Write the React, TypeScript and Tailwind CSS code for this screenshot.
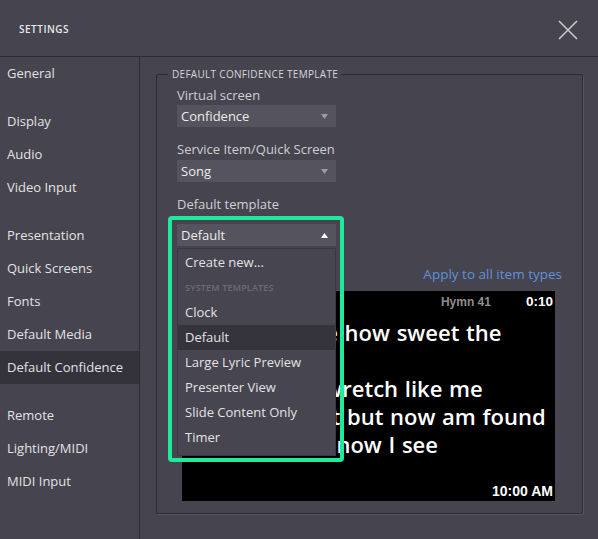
import React from "react";

const SIDEBAR_GROUPS: string[][] = [
  ["General"],
  ["Display", "Audio", "Video Input"],
  ["Presentation", "Quick Screens", "Fonts", "Default Media", "Default Confidence"],
  ["Remote", "Lighting/MIDI", "MIDI Input"],
];

const SELECTED = "Default Confidence";

const TEMPLATES = ["Clock", "Default", "Large Lyric Preview", "Presenter View", "Slide Content Only", "Timer"];

const LYRICS = [
  "Amazing grace how sweet the",
  "sound",
  "That saved a wretch like me",
  "I once was lost but now am found",
  "Was blind but now I see",
];

const Caret = ({ up = false, className = "" }: { up?: boolean; className?: string }) => (
  <svg width="7" height="5" viewBox="0 0 7 5" className={className}>
    <path d={up ? "M0 5 L3.5 0 L7 5 Z" : "M0 0 L7 0 L3.5 5 Z"} fill="currentColor" />
  </svg>
);

const Select = ({ value, open = false }: { value: string; open?: boolean }) => (
  <div className="flex h-[22px] w-[159px] items-center justify-between bg-[#55535d] pl-[4px] pr-[8px] text-[13px] leading-none text-[#ececec]">
    <span>{value}</span>
    <Caret up={open} className={open ? "text-white" : "text-[#9d9ba5]"} />
  </div>
);

export default function App() {
  return (
    <div className="flex h-[539px] w-[598px] flex-col overflow-hidden bg-[#46444e] font-['Open_Sans','Noto_Sans',sans-serif] text-[#e2e2e4]">
      <header className="flex h-[57px] shrink-0 items-center justify-between border-b border-[#2d2c33] pl-[19px] pr-[20px] pt-[3px]">
        <span className="text-[10px] font-semibold tracking-[0.05em] text-[#e8e8ea]">SETTINGS</span>
        <svg width="20" height="20" viewBox="0 0 20 20" className="text-[#c9c8cd]">
          <path d="M1 1 L19 19 M19 1 L1 19" stroke="currentColor" strokeWidth="1.6" />
        </svg>
      </header>

      <div className="flex flex-1">
        <nav className="flex w-[140px] shrink-0 flex-col gap-[15px] border-r border-[#2d2c33]">
          {SIDEBAR_GROUPS.map((group, i) => (
            <div key={i} className="flex flex-col">
              {group.map((item) => (
                <div
                  key={item}
                  className={`flex h-[33px] items-center pl-[7px] text-[13px] ${
                    item === SELECTED ? "bg-[#34333c]" : ""
                  }`}
                >
                  {item}
                </div>
              ))}
            </div>
          ))}
        </nav>

        <main className="flex-1 pb-[25px] pl-[16px] pr-[15px] pt-[11px]">
          <fieldset className="h-full rounded-[2px] border border-[#2d2c33] shadow-[1px_1px_0_#58565f]">
            <legend className="ml-[11px] px-[4px] text-[10px] leading-[12px] tracking-[0.03em] text-[#d6d6da]">
              DEFAULT CONFIDENCE TEMPLATE
            </legend>

            <div className="px-[20px]">
              <div className="mt-[6px] text-[13px] leading-[18px] text-[#cfcfd3]">Virtual screen</div>
              <div className="mt-[1px]">
                <Select value="Confidence" />
              </div>

              <div className="mt-[13px] text-[13px] leading-[18px] text-[#cfcfd3]">Service Item/Quick Screen</div>
              <div className="mt-[2px]">
                <Select value="Song" />
              </div>

              <div className="mt-[13px] text-[13px] leading-[18px] text-[#cfcfd3]">Default template</div>
              <div className="relative z-10 mt-[11px] w-[159px]">
                <div className="pointer-events-none absolute -bottom-[216px] -left-[9px] -right-[8px] -top-[8px] rounded-[4px] border-4 border-[#1fe99b]" />
                <Select value="Default" open />
                <div className="absolute left-0 right-0 top-[24px] border border-[#3a3942] bg-[#47454f] pb-[5px] pt-[1px] text-[13px] text-[#e2e2e4]">
                  <div className="flex h-[25px] items-center pl-[7px]">Create new...</div>
                  <div className="flex h-[25px] items-center pl-[7px] text-[9px] font-semibold tracking-[0.02em] text-[#6d6b76]">
                    SYSTEM TEMPLATES
                  </div>
                  {TEMPLATES.map((t) => (
                    <div
                      key={t}
                      className={`flex h-[25px] items-center pl-[7px] ${t === "Default" ? "bg-[#35343d]" : ""}`}
                    >
                      {t}
                    </div>
                  ))}
                </div>
              </div>

              <div className="mt-[19px] flex justify-end text-[13.5px] leading-[18px] text-[#5e91dc]">
                Apply to all item types
              </div>

              <div className="ml-[5px] mt-[8px] flex h-[210px] w-[373px] flex-col overflow-hidden bg-black text-white">
                <div className="flex items-baseline justify-end gap-[35px] pr-[2px] pt-[1px] font-['Liberation_Sans',Arial,sans-serif] font-bold">
                  <span className="text-[12px] text-[#8e8e8e]">Hymn 41</span>
                  <span className="text-[13.5px]">0:10</span>
                </div>
                <div className="mt-[6px] flex flex-col text-[22px] font-semibold leading-[28px] [word-spacing:1px]">
                  {LYRICS.map((line) => (
                    <span key={line} className="whitespace-nowrap">
                      {line}
                    </span>
                  ))}
                </div>
                <div className="mt-auto flex justify-end pr-[2px] font-['Liberation_Sans',Arial,sans-serif] text-[14px] font-bold leading-[20px]">
                  10:00 AM
                </div>
              </div>
            </div>
          </fieldset>
        </main>
      </div>
    </div>
  );
}
